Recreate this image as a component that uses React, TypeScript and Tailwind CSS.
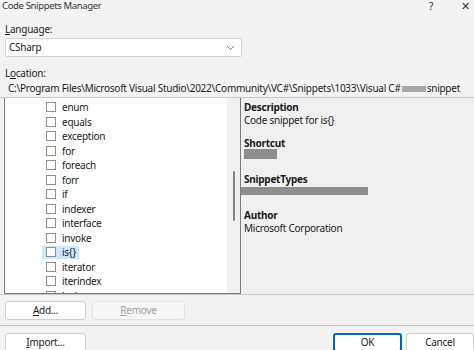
import React from "react";

const snippets = [
  "enum",
  "equals",
  "exception",
  "for",
  "foreach",
  "forr",
  "if",
  "indexer",
  "interface",
  "invoke",
  "is{}",
  "iterator",
  "iterindex",
  "lock",
];

function Row({ label, selected }: { label: string; selected?: boolean }) {
  return (
    <div className="flex h-[14.5px] items-center pl-[37px]">
      <div
        className={`flex h-[13px] items-center gap-[6px] pl-[4px] pr-[3px] ${
          selected ? "bg-[#cce8ff]" : ""
        }`}
      >
        <span className="block h-[10px] w-[10px] border border-[#8f8f8f] bg-white" />
        <span className="leading-none text-[#1a1a1a]">{label}</span>
      </div>
    </div>
  );
}

function Field({ title, children }: { title: string; children: React.ReactNode }) {
  return (
    <div className="mb-[10px] flex flex-col">
      <div className="font-bold leading-[13px] text-[#1a1a1a]">{title}</div>
      <div className="flex h-[13px] flex-col leading-[13px] text-[#1a1a1a]">{children}</div>
    </div>
  );
}

export default function App() {
  return (
    <div className="relative h-[350px] w-[474px] overflow-hidden bg-[#f3f3f3] font-['Noto_Sans',sans-serif] text-[10px] tracking-[-0.25px] text-[#1a1a1a]">
      {/* title bar */}
      <div className="flex h-[12px] items-center justify-between pl-[2px] pr-[4px]">
        <span className="text-[9.5px] tracking-[-0.35px] text-[#333]">Code Snippets Manager</span>
        <div className="flex items-center gap-[28px] text-[11px] text-[#333]">
          <span>?</span>
          <span>✕</span>
        </div>
      </div>

      <div className="px-[5px]">
        <div className="mt-[11px] leading-[12px]">
          <span className="underline underline-offset-1">L</span>anguage:
        </div>
        <div className="mt-[3px] flex h-[19px] w-[237px] items-center justify-between rounded-[2px] border border-[#d5d5d5] bg-white pl-[3px] pr-[6px]">
          <span>CSharp</span>
          <svg width="9" height="6" viewBox="0 0 9 6" fill="none">
            <path d="M1 1l3.5 3.5L8 1" stroke="#7a7a7a" strokeWidth="1" />
          </svg>
        </div>

        <div className="mt-[10px] leading-[12px]">
          L<span className="underline underline-offset-1">o</span>cation:
        </div>
        <div className="mt-[1px] flex h-[17px] items-center whitespace-nowrap pl-[3px]">
          <span>C:\Program Files\Microsoft Visual Studio\2022\Community\VC#\Snippets\1033\Visual C#</span>
          <span className="mx-[1px] inline-block h-[6px] w-[24px] bg-[#a8a8a8]" />
          <span>snippet</span>
        </div>
      </div>

      {/* main area */}
      <div className="flex h-[198px] border-t border-b border-[#c9c9c9] pl-[4px]">
        <div className="flex w-[237px] border-x border-b border-[#7a7a7a] bg-white">
          <div className="flex-1 overflow-hidden pt-[2px]">
            {snippets.map((s) => (
              <Row key={s} label={s} selected={s === "is{}"} />
            ))}
          </div>
          <div className="flex w-[13px] justify-center bg-[#f0f0f0] pt-[73px]">
            <div className="h-[50px] w-[2px] rounded-full bg-[#858585]" />
          </div>
        </div>
        <div className="flex-1 bg-[#f0f0f0] pl-[3px] pt-[3px]">
          <Field title="Description">Code snippet for is{"{}"}</Field>
          <Field title="Shortcut">
            <span className="-mt-[1px] block h-[10px] w-[33px] bg-[#8e8e8e]" />
          </Field>
          <Field title="SnippetTypes">
            <span className="mt-[1px] ml-[-3px] block h-[8px] w-[127px] bg-[#8e8e8e]" />
          </Field>
          <Field title="Author">Microsoft Corporation</Field>
        </div>
      </div>

      {/* add / remove */}
      <div className="mt-[6px] flex gap-[6px] px-[5px]">
        <button className="h-[19px] w-[81px] rounded-[3px] border border-[#d0d0d0] bg-white text-[#1a1a1a]">
          <span className="underline underline-offset-1">A</span>dd...
        </button>
        <button className="h-[19px] w-[93px] rounded-[3px] border border-[#e3e3e3] bg-[#f7f7f7] text-[#a0a0a0]">
          <span className="underline underline-offset-1">R</span>emove
        </button>
      </div>

      <div className="mt-[5px] h-[1px] bg-[#c8c8c8]" />

      {/* bottom buttons */}
      <div className="mt-[7px] flex px-[5px]">
        <button className="h-[19px] w-[81px] rounded-[3px] border border-[#d0d0d0] bg-white">
          <span className="underline underline-offset-1">I</span>mport...
        </button>
        <div className="flex-1" />
        <button className="h-[19px] w-[69px] rounded-[3px] border-2 border-[#0067c0] bg-white">
          OK
        </button>
        <button className="ml-[4px] -mr-[5px] h-[19px] w-[68px] rounded-[3px] border border-[#d0d0d0] bg-white">
          Cancel
        </button>
      </div>
    </div>
  );
}
